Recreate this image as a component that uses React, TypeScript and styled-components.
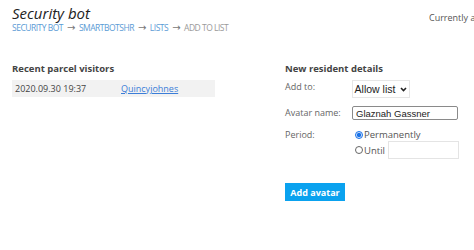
import React from "react";
import styled, { createGlobalStyle } from "styled-components";

const GlobalStyle = createGlobalStyle`
  html, body {
    margin: 0;
    padding: 0;
    background: #ffffff;
    overflow: hidden;
  }
  body {
    font-family: "Open Sans", "Noto Sans", sans-serif;
    color: #555;
  }
`;

const Page = styled.div`
  width: 474px;
  height: 250px;
  padding: 4px 12px 0 12px;
  box-sizing: border-box;
  overflow: hidden;
`;

const Header = styled.header`
  display: flex;
  align-items: flex-start;
  height: 50px;
`;

const TitleBlock = styled.div`
  flex: 0 0 417px;
`;

const Title = styled.h1`
  margin: 0;
  font-size: 15px;
  line-height: 18px;
  font-style: italic;
  font-weight: 400;
  color: #222;
`;

const Crumbs = styled.div`
  display: flex;
  align-items: center;
  gap: 4px;
  font-size: 8.5px;
  line-height: 12px;
  text-transform: uppercase;
  letter-spacing: -0.5px;
`;

const Crumb = styled.a<{ $current?: boolean }>`
  color: ${(p) => (p.$current ? "#9a9a9a" : "#5b9bd5")};
  text-decoration: none;
`;

const Arrow = styled.span`
  color: #777;
  font-size: 10px;
  font-family: "DejaVu Sans", sans-serif;
`;

const Status = styled.div`
  white-space: nowrap;
  font-size: 9px;
  line-height: 12px;
  margin-top: 8px;
  color: #555;
`;

const Columns = styled.div`
  display: flex;
  margin-top: 8px;
`;

const LeftCol = styled.section`
  flex: 0 0 273px;
`;

const RightCol = styled.section`
  flex: 1;
`;

const SectionTitle = styled.h2`
  margin: 0 0 5px 0;
  font-size: 9.5px;
  line-height: 13px;
  font-weight: 700;
  color: #444;
`;

const VisitorRow = styled.div`
  width: 203px;
  height: 17px;
  background: #f2f2f2;
  display: flex;
  align-items: center;
  font-size: 9px;
  color: #444;
`;

const DateCell = styled.span`
  flex: 0 0 106px;
  padding-left: 3px;
`;

const NameLink = styled.a`
  color: #3b7dd8;
  text-decoration: underline;
`;

const FormRow = styled.div<{ $top?: number }>`
  display: flex;
  align-items: flex-start;
  margin-top: ${(p) => p.$top ?? 0}px;
`;

const Label = styled.label`
  flex: 0 0 67px;
  font-size: 9px;
  line-height: 14px;
  color: #666;
`;

const SelectBox = styled.div`
  width: 58px;
  height: 18px;
  border: 1px solid #e6e6e6;
  box-sizing: border-box;
  display: flex;
  align-items: center;
  justify-content: center;
  gap: 5px;
  font-family: "Liberation Sans", Arial, sans-serif;
  font-size: 10.5px;
  color: #222;
`;

const TextInput = styled.input`
  width: 106px;
  height: 14px;
  box-sizing: border-box;
  border: 1px solid #8a8a8a;
  border-radius: 2px;
  padding: 0 3px;
  font-family: "Liberation Sans", Arial, sans-serif;
  font-size: 9.5px;
  color: #222;
  outline: none;
`;

const RadioList = styled.div`
  display: flex;
  flex-direction: column;
  margin-left: 3px;
`;

const RadioLine = styled.div`
  display: flex;
  align-items: center;
  font-size: 9.5px;
  color: #555;
  gap: 1px;
`;

const RadioDot = styled.span<{ $on?: boolean }>`
  width: 8px;
  height: 8px;
  border-radius: 50%;
  box-sizing: border-box;
  border: 1px solid ${(p) => (p.$on ? "#1a73e8" : "#666")};
  background: ${(p) => (p.$on ? "radial-gradient(circle, #1a73e8 45%, #cfe0fb 55%)" : "#fff")};
`;

const UntilInput = styled.input`
  width: 71px;
  height: 18px;
  box-sizing: border-box;
  border: 1px solid #e4e4e4;
  margin-left: 2px;
  outline: none;
`;

const Button = styled.button`
  margin-top: 24px;
  width: 60px;
  height: 18px;
  border: none;
  background: #0aa2ef;
  color: #fff;
  font-family: "Open Sans", sans-serif;
  font-size: 9px;
  font-weight: 700;
  padding: 0;
`;

const Chevron = () => (
  <svg width="7" height="5" viewBox="0 0 7 5">
    <path d="M1 1 L3.5 3.5 L6 1" stroke="#222" strokeWidth="1.6" fill="none" />
  </svg>
);

export default function App() {
  return (
    <>
      <GlobalStyle />
      <Page>
        <Header>
          <TitleBlock>
            <Title>Security bot</Title>
            <Crumbs>
              <Crumb href="#">Security bot</Crumb>
              <Arrow>→</Arrow>
              <Crumb href="#">SmartBotsHR</Crumb>
              <Arrow>→</Arrow>
              <Crumb href="#">Lists</Crumb>
              <Arrow>→</Arrow>
              <Crumb $current>Add to list</Crumb>
            </Crumbs>
          </TitleBlock>
          <Status>Currently a</Status>
        </Header>
        <Columns>
          <LeftCol>
            <SectionTitle>Recent parcel visitors</SectionTitle>
            <VisitorRow>
              <DateCell>2020.09.30 19:37</DateCell>
              <NameLink href="#">Quincyjohnes</NameLink>
            </VisitorRow>
          </LeftCol>
          <RightCol>
            <SectionTitle>New resident details</SectionTitle>
            <FormRow>
              <Label>Add to:</Label>
              <SelectBox>
                Allow list <Chevron />
              </SelectBox>
            </FormRow>
            <FormRow $top={8}>
              <Label>Avatar name:</Label>
              <TextInput defaultValue="Glaznah Gassner" />
            </FormRow>
            <FormRow $top={8}>
              <Label>Period:</Label>
              <RadioList>
                <RadioLine>
                  <RadioDot $on />
                  Permanently
                </RadioLine>
                <RadioLine>
                  <RadioDot />
                  Until
                  <UntilInput />
                </RadioLine>
              </RadioList>
            </FormRow>
            <Button>Add avatar</Button>
          </RightCol>
        </Columns>
      </Page>
    </>
  );
}
